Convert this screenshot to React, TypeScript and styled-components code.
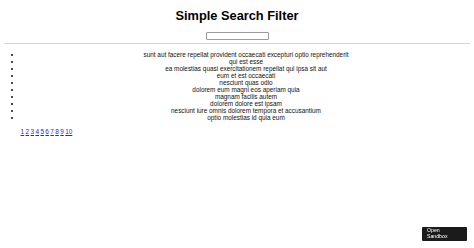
import React from 'react';
import styled, { createGlobalStyle } from 'styled-components';

const GlobalStyle = createGlobalStyle`
  body {
    margin: 0;
    padding: 3.6px;
    background: #fff;
    font-family: "Liberation Sans", Arial, sans-serif;
    font-size: 7.2px;
    color: #111;
  }
`;

const posts = [
  'sunt aut facere repellat provident occaecati excepturi optio reprehenderit',
  'qui est esse',
  'ea molestias quasi exercitationem repellat qui ipsa sit aut',
  'eum et est occaecati',
  'nesciunt quas odio',
  'dolorem eum magni eos aperiam quia',
  'magnam facilis autem',
  'dolorem dolore est ipsam',
  'nesciunt iure omnis dolorem tempora et accusantium',
  'optio molestias id quia eum',
];

const Header = styled.header`
  display: flex;
  flex-direction: column;
  align-items: center;
`;

const Title = styled.h1`
  margin: 4.3px 0 0;
  font-size: 12.8px;
  font-weight: bold;
  color: #000;
`;

const SearchInput = styled.input`
  margin-top: 8.8px;
  width: 63px;
  height: 8px;
  box-sizing: border-box;
  border: 1px solid #9a9a9a;
  border-radius: 1px;
  padding: 0;
  background: #fff;
`;

const Divider = styled.hr`
  margin: 3.8px 0 0;
  border: none;
  border-top: 1px solid #d6d6d6;
  height: 0;
`;

const PostList = styled.ul`
  margin: 6.4px 0 0;
  padding-left: 18px;
`;

const PostItem = styled.li`
  text-align: center;
  line-height: 7px;
  font-size: 6.4px;
`;

const Pagination = styled.nav`
  display: flex;
  padding-left: 17px;
  margin-top: 7px;
  font-size: 6.4px;
`;

const PageLink = styled.a`
  color: #2222ee;
  text-decoration: underline;
  margin-right: 1.4px;
`;

const SandboxButton = styled.a`
  position: fixed;
  right: 7px;
  bottom: 7px;
  width: 45px;
  height: 14px;
  box-sizing: border-box;
  padding: 1px 5px;
  background: #1b1b1b;
  border-radius: 1px;
  color: #fff;
  font-size: 5.2px;
  line-height: 5.8px;
  text-decoration: none;
`;

export default function App() {
  return (
    <>
      <GlobalStyle />
      <Header>
        <Title>Simple Search Filter</Title>
        <SearchInput type="text" />
      </Header>
      <Divider />
      <PostList>
        {posts.map((title) => (
          <PostItem key={title}>{title}</PostItem>
        ))}
      </PostList>
      <Pagination>
        {Array.from({ length: 10 }, (_, i) => (
          <PageLink key={i} href="#">
            {i + 1}
          </PageLink>
        ))}
      </Pagination>
      <SandboxButton href="#">
        Open
        <br />
        Sandbox
      </SandboxButton>
    </>
  );
}
